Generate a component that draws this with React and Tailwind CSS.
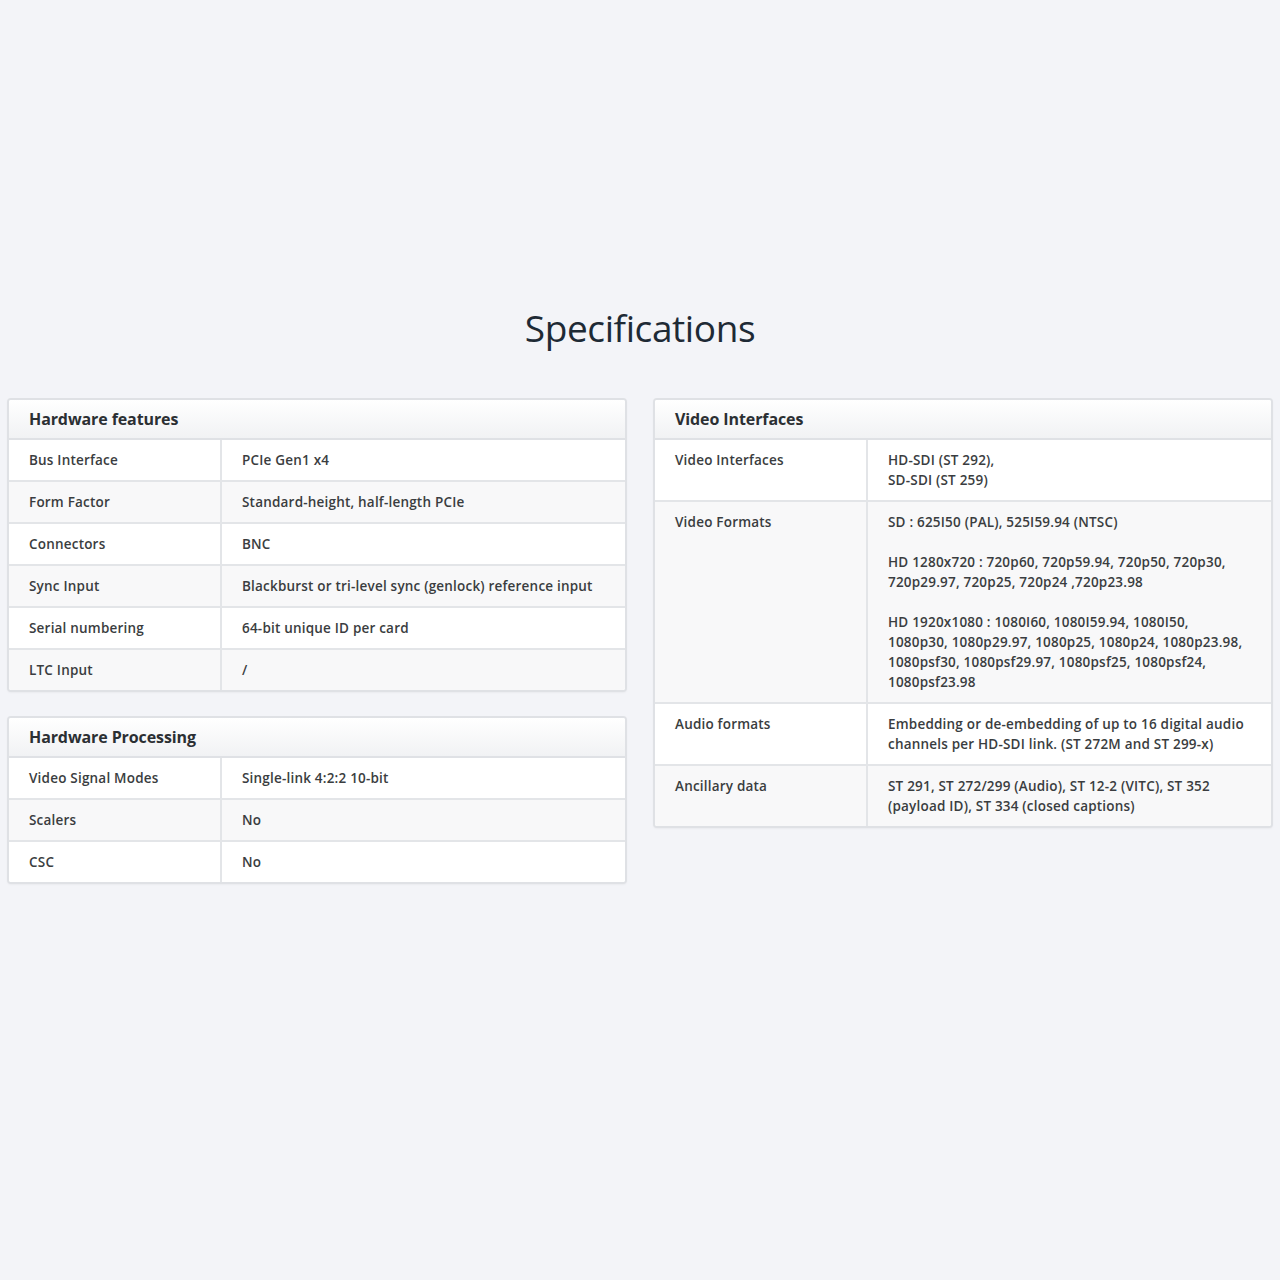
import React from 'react';

const hardwareFeatures = [
  ['Bus Interface', ['PCIe Gen1 x4']],
  ['Form Factor', ['Standard-height, half-length PCIe']],
  ['Connectors', ['BNC']],
  ['Sync Input', ['Blackburst or tri-level sync (genlock) reference input']],
  ['Serial numbering', ['64-bit unique ID per card']],
  ['LTC Input', ['/']],
];

const hardwareProcessing = [
  ['Video Signal Modes', ['Single-link 4:2:2 10-bit']],
  ['Scalers', ['No']],
  ['CSC', ['No']],
];

const videoInterfaces = [
  ['Video Interfaces', ['HD-SDI (ST 292),\nSD-SDI (ST 259)']],
  [
    'Video Formats',
    [
      'SD : 625I50 (PAL), 525I59.94 (NTSC)',
      'HD 1280x720 : 720p60, 720p59.94, 720p50, 720p30, 720p29.97, 720p25, 720p24 ,720p23.98',
      'HD 1920x1080 : 1080I60, 1080I59.94, 1080I50,\n1080p30, 1080p29.97, 1080p25, 1080p24, 1080p23.98,\n1080psf30, 1080psf29.97, 1080psf25, 1080psf24,\n1080psf23.98',
    ],
  ],
  ['Audio formats', ['Embedding or de-embedding of up to 16 digital audio channels per HD-SDI link. (ST 272M and ST 299-x)']],
  ['Ancillary data', ['ST 291, ST 272/299 (Audio), ST 12-2 (VITC), ST 352 (payload ID), ST 334 (closed captions)']],
];

const SpecPanel = ({ title, rows }) => (
  <div className="rounded-[4px] border-2 border-[#dfe1e5] bg-white shadow-[0_1px_2px_rgba(0,0,0,0.04)] overflow-hidden">
    <div className="h-[40px] flex items-center px-[20px] bg-gradient-to-b from-white to-[#f1f2f4] border-b-2 border-[#dfe1e5]">
      <h3 className="text-[16px] font-bold text-[#2b2f33] tracking-[-0.1px]">{title}</h3>
    </div>
    {rows.map(([label, paras], i) => (
      <div
        key={label}
        className={`grid grid-cols-[213px_1fr] ${i > 0 ? 'border-t-2 border-[#e3e5e8]' : ''} ${i % 2 === 1 ? 'bg-[#f8f8f9]' : 'bg-white'}`}
      >
        <div className="px-[20px] py-[10px] text-[13.5px] leading-[20px] font-semibold text-[#3a3d40] border-r-2 border-[#e3e5e8] tracking-[0.2px]">
          {label}
        </div>
        <div className="pl-[20px] pr-[14px] py-[10px] text-[13.5px] leading-[20px] font-semibold text-[#3a3d40] flex flex-col gap-[20px] tracking-[0.2px]">
          {paras.map((p) => (
            <p key={p} className="whitespace-pre-line">{p}</p>
          ))}
        </div>
      </div>
    ))}
  </div>
);

const App = () => {
  return (
    <div className="min-h-[1280px] bg-[#f3f4f8] font-['Open_Sans',sans-serif] pt-[302px]">
      <h2 className="text-center text-[37px] leading-[52px] font-medium text-[#1e2a35] tracking-[-0.4px]">
        Specifications
      </h2>
      <div className="mt-[44px] px-[7px] grid grid-cols-2 gap-[26px] items-start">
        <div className="flex flex-col gap-[24px]">
          <SpecPanel title="Hardware features" rows={hardwareFeatures} />
          <SpecPanel title="Hardware Processing" rows={hardwareProcessing} />
        </div>
        <SpecPanel title="Video Interfaces" rows={videoInterfaces} />
      </div>
    </div>
  );
};

export default App;
